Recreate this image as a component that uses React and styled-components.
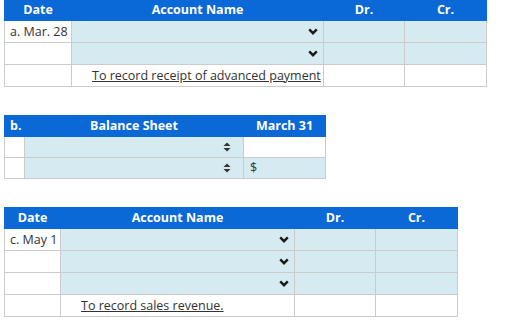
import React from "react"
import styled, { createGlobalStyle } from "styled-components"

const GlobalStyle = createGlobalStyle`
  body {
    margin: 0;
    background: #fff;
    font-family: "Open Sans", "Liberation Sans", sans-serif;
    color: #333;
  }
`

const Page = styled.div`
  display: flex;
  flex-direction: column;
  align-items: flex-start;
  gap: 28px;
  margin-top: -1px;
  padding: 0 4px;
`

const Table = styled.table`
  border-collapse: collapse;
  table-layout: fixed;
  width: ${({ $width }) => $width}px;
  font-size: 12.5px;
`

const HeadCell = styled.th`
  background: #0a68d7;
  color: #fff;
  font-weight: 700;
  height: 20px;
  padding: 0 5px;
  border: 1px solid #0a68d7;
  text-align: ${({ $align }) => $align || "center"};
  line-height: 18px;
`

const Cell = styled.td`
  height: ${({ $h }) => $h || 21}px;
  padding: 0 5px;
  border: 1px solid #cbcbcb;
  background: ${({ $fill }) => ($fill ? "#d5eaf1" : "#fff")};
  text-align: ${({ $align }) => $align || "left"};
  vertical-align: middle;
  line-height: 16px;
  white-space: nowrap;
`

const SelectBox = styled.div`
  display: flex;
  justify-content: flex-end;
  align-items: center;
  padding-right: ${({ $pad }) => $pad || 0}px;
`

const Memo = styled.span`
  display: inline-block;
  padding-left: ${({ $indent }) => $indent}px;
  text-decoration: underline;
  color: #333;
`

const Dollar = styled.span`
  color: #333;
  padding-left: 1px;
`

const Chevron = () => (
  <svg width="10" height="7" viewBox="0 0 10 7">
    <path d="M1.2 1.4 L5 5.2 L8.8 1.4" fill="none" stroke="#1a1a1a" strokeWidth="2.4" />
  </svg>
)

const UpDown = () => (
  <svg width="8" height="10" viewBox="0 0 8 10">
    <path d="M4 0.5 L7.5 4 L0.5 4 Z" fill="#333" />
    <path d="M4 9.5 L7.5 6 L0.5 6 Z" fill="#333" />
  </svg>
)

const JournalTable = ({ widths, date, rows, memo }) => (
  <Table $width={widths.reduce((a, b) => a + b, 0)}>
    <colgroup>
      {widths.map((w, i) => (
        <col key={i} style={{ width: w }} />
      ))}
    </colgroup>
    <thead>
      <tr>
        <HeadCell>Date</HeadCell>
        <HeadCell>Account Name</HeadCell>
        <HeadCell>Dr.</HeadCell>
        <HeadCell>Cr.</HeadCell>
      </tr>
    </thead>
    <tbody>
      {Array.from({ length: rows }).map((_, i) => (
        <tr key={i}>
          <Cell>{i === 0 ? date : ""}</Cell>
          <Cell $fill>
            <SelectBox>
              <Chevron />
            </SelectBox>
          </Cell>
          <Cell $fill />
          <Cell $fill />
        </tr>
      ))}
      <tr>
        <Cell />
        <Cell>
          <Memo $indent={15}>{memo}</Memo>
        </Cell>
        <Cell />
        <Cell />
      </tr>
    </tbody>
  </Table>
)

const BalanceTable = () => (
  <Table $width={321}>
    <colgroup>
      <col style={{ width: 20 }} />
      <col style={{ width: 219 }} />
      <col style={{ width: 82 }} />
    </colgroup>
    <thead>
      <tr>
        <HeadCell $align="left">b.</HeadCell>
        <HeadCell>Balance Sheet</HeadCell>
        <HeadCell>March 31</HeadCell>
      </tr>
    </thead>
    <tbody>
      <tr>
        <Cell $h={20} />
        <Cell $h={20} $fill>
          <SelectBox $pad={7}>
            <UpDown />
          </SelectBox>
        </Cell>
        <Cell $h={20} />
      </tr>
      <tr>
        <Cell $h={20} />
        <Cell $h={20} $fill>
          <SelectBox $pad={7}>
            <UpDown />
          </SelectBox>
        </Cell>
        <Cell $h={20} $fill>
          <Dollar>$</Dollar>
        </Cell>
      </tr>
    </tbody>
  </Table>
)

export default function App() {
  return (
    <>
      <GlobalStyle />
      <Page>
        <JournalTable
          widths={[67, 252, 81, 82]}
          date="a. Mar. 28"
          rows={2}
          memo="To record receipt of advanced payment"
        />
        <BalanceTable />
        <JournalTable
          widths={[56, 234, 81, 82]}
          date="c. May 1"
          rows={3}
          memo="To record sales revenue."
        />
      </Page>
    </>
  )
}
